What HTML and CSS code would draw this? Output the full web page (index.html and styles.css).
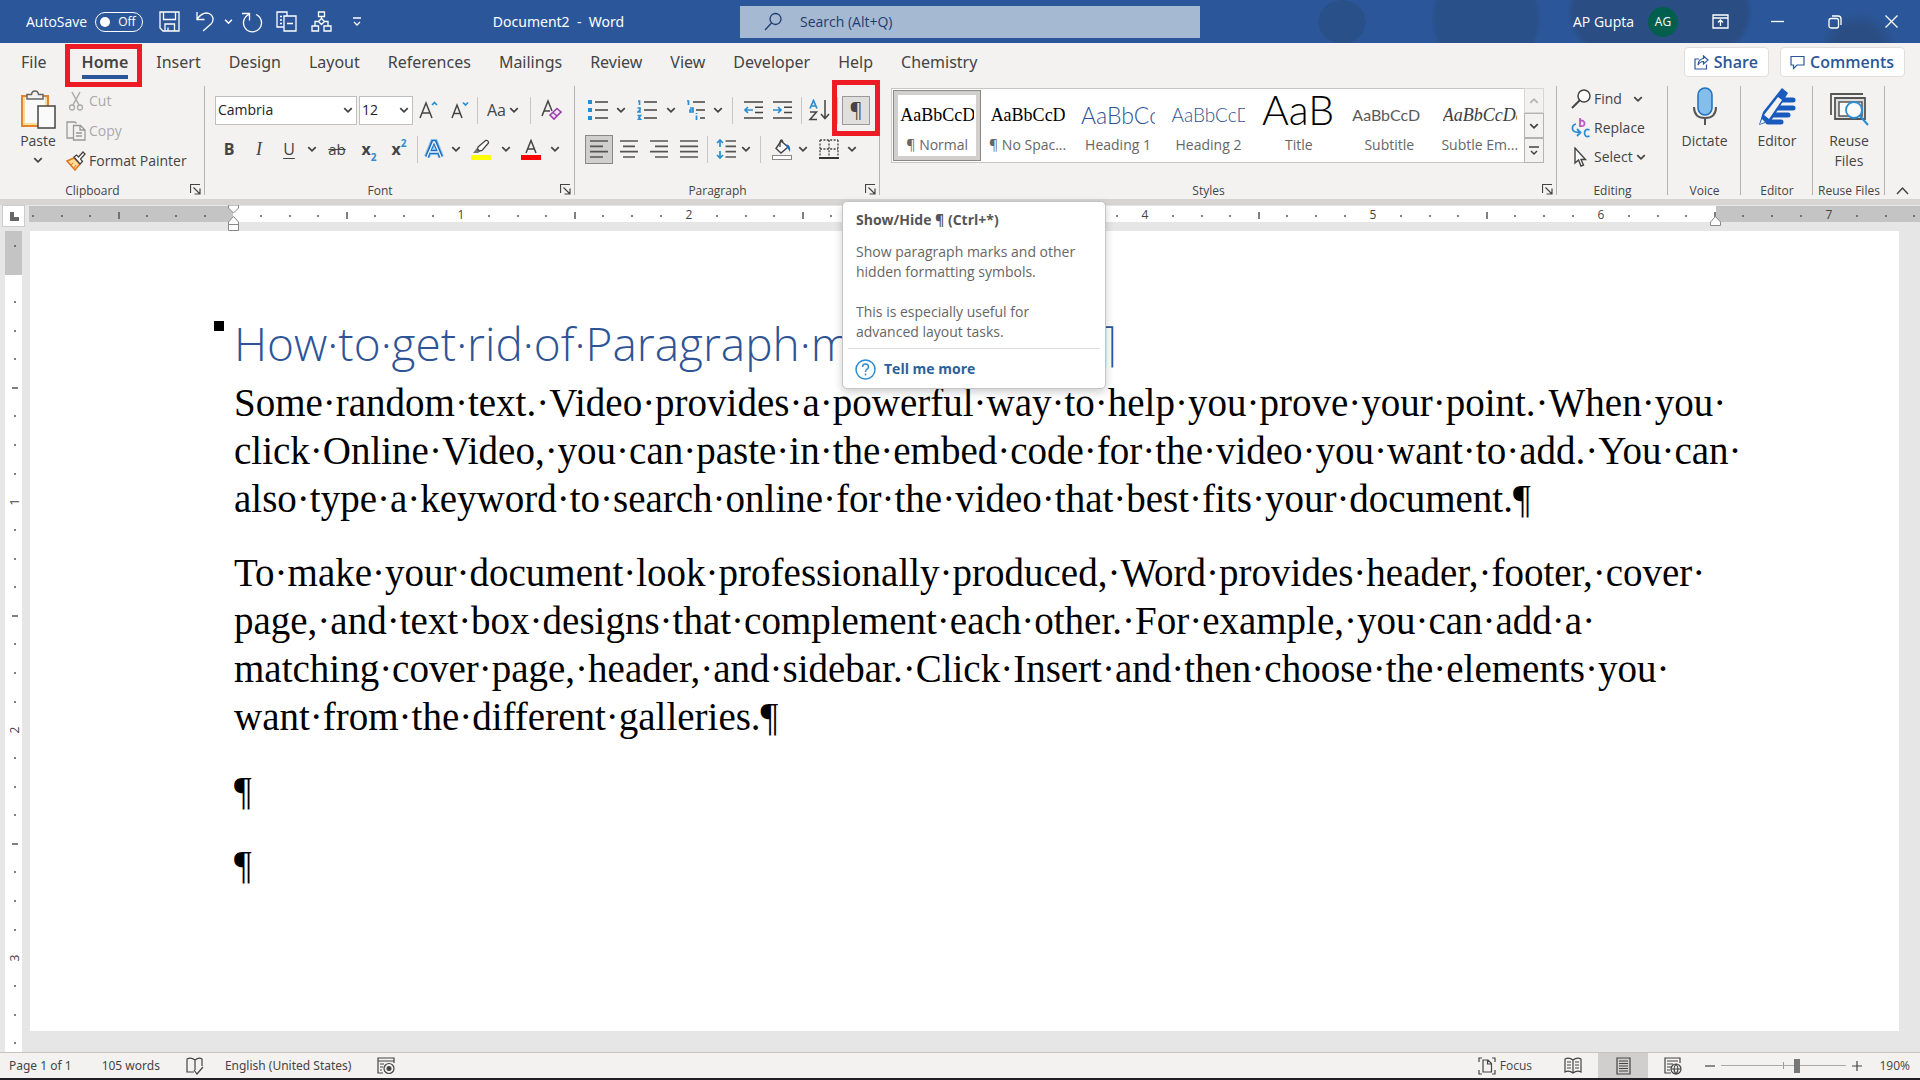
FILE: index.html
```html
<!DOCTYPE html>
<html lang="en">
<head>
<meta charset="utf-8">
<title>Document2 - Word</title>
<link rel="stylesheet" href="styles.css">
</head>
<body>
<svg class="defs" aria-hidden="true">
  <symbol id="chev" viewBox="0 0 8 8"><path d="M1 2.5 4 5.5 7 2.5" fill="none" stroke="currentColor" stroke-width="1.4"/></symbol>
  <symbol id="launch" viewBox="0 0 11 11"><path d="M.5 9V.5H10M3.5 3.500 9.500 9.500M10 4.500V10H4.500" fill="none" stroke="#444" stroke-width="1.2"/></symbol>
</svg>

<header class="titlebar">
  <div class="quick">
    <label class="autosave">AutoSave <span class="switch"><input type="checkbox">Off</span></label>
    <button class="q" aria-label="Save"><svg width="21" height="21" viewBox="0 0 21 21"><path d="M1 1H20V20H4L1 17ZM4.500 1V8.500H16.500V1M6 20V13H15.500V20M9 20V16.500"/></svg></button>
    <button class="q" aria-label="Undo"><svg width="20" height="21" viewBox="0 0 20 21"><path d="M2 1V8.500H9.500M2 8C6 3 10 1 14 2.500C19 4.500 19 10 16 13L8 20"/></svg></button>
    <button class="q narrow" aria-label="Undo list"><svg width="9" height="9"><use href="#chev"/></svg></button>
    <button class="q" aria-label="Redo"><svg width="22" height="22" viewBox="0 0 22 22"><path d="M1 2.500H8.500V9.500M8 3.500A9 9 0 1 0 15 3.500"/></svg></button>
    <button class="q" aria-label="Copy format"><svg width="21" height="21" viewBox="0 0 21 21"><path d="M8 16H1V1H11V5M8 5H20V20H8ZM4 5.500H6M4 9H6M11 12.500H17M4 12.500H6"/></svg></button>
    <button class="q" aria-label="Hierarchy"><svg width="21" height="21" viewBox="0 0 21 21"><path d="M7.500 1H13.500V5.500H7.500ZM10.500 5.500V7.500M10.500 7.500 13.500 10.500 10.500 13.500 7.500 10.500ZM7.500 10.500H4V15M13.500 10.500H17V15M1 15H7.500V20H1ZM13 15H20V20H13Z"/></svg></button>
    <button class="q" aria-label="Customize"><svg width="10" height="10" viewBox="0 0 10 10"><path d="M1 1H9M2 5 5 8 8 5"/></svg></button>
    <span class="doc-title">Document2 &nbsp;- &nbsp;Word</span>
  </div>
  <label class="search"><svg width="19" height="19" viewBox="0 0 19 19"><circle cx="11.500" cy="7" r="5.500"/><path d="M7.500 11 1 18"/></svg><input type="text" placeholder="Search (Alt+Q)" aria-label="Search"></label>
  <div class="account">
    <span>AP Gupta</span><span class="avatar">AG</span>
    <button class="win" aria-label="Ribbon display"><svg width="17" height="15" viewBox="0 0 17 15"><path d="M1 1H16V14H1ZM1 4H16M8.500 12V6M6 8.500 8.500 6 11 8.500"/></svg></button>
    <button class="win" aria-label="Minimize"><svg width="13" height="13"><path d="M0 6.500H13"/></svg></button>
    <button class="win" aria-label="Restore"><svg width="14" height="14" viewBox="0 0 14 14"><rect x="1" y="3.500" width="9.500" height="9.500" rx="2"/><path d="M4 1H10Q13 1 13 4V10"/></svg></button>
    <button class="win" aria-label="Close"><svg width="13" height="13"><path d="M.5.5 12.500 12.500M12.500.5.5 12.500"/></svg></button>
  </div>
</header>

<nav class="tabs">
  <button class="tab file">File</button>
  <button class="tab active"><span>Home</span></button>
  <button class="tab">Insert</button>
  <button class="tab">Design</button>
  <button class="tab">Layout</button>
  <button class="tab">References</button>
  <button class="tab">Mailings</button>
  <button class="tab">Review</button>
  <button class="tab">View</button>
  <button class="tab">Developer</button>
  <button class="tab">Help</button>
  <button class="tab">Chemistry</button>
  <div class="tab-actions">
    <button class="action"><svg width="15" height="15" viewBox="0 0 15 15"><path d="M5 4H1V14H12.500V9.500M9.500 1 14 5 9.500 9V6.500Q6 6.500 4 10Q4.500 4 9.500 3.500Z"/></svg>Share</button>
    <button class="action"><svg width="15" height="15" viewBox="0 0 15 15"><path d="M1 1.500H14V10H7L3.500 13.500V10H1Z"/></svg>Comments</button>
  </div>
</nav>

<section class="ribbon">
  <div class="group clipboard">
    <div class="body">
      <button class="big"><svg width="36" height="39" viewBox="0 0 36 39"><path d="M2 6H28V36H2Z" fill="#fddb96" stroke="#e0852d" stroke-width="2"/><path d="M5 7H25V33H5Z" fill="#fafafa"/><path d="M7 9V4.500H11.500Q12 1 15 1T18.500 4.500H23V9Z" fill="#f3f2f1" stroke="#666" stroke-width="1.500"/><rect x="18" y="16" width="17" height="22" fill="#fafafa" stroke="#444" stroke-width="1.500"/></svg><span>Paste</span><svg width="10" height="10"><use href="#chev"/></svg></button>
      <div class="stack">
        <button class="line off"><svg width="20" height="20" viewBox="0 0 20 20"><path d="M6 1 13 14M14 1 7 14" fill="none" stroke="#aaa" stroke-width="1.500"/><circle cx="6" cy="16.500" r="2.500" fill="none" stroke="#aaa" stroke-width="1.300"/><circle cx="14" cy="16.500" r="2.500" fill="none" stroke="#aaa" stroke-width="1.300"/></svg>Cut</button>
        <button class="line off"><svg width="20" height="20" viewBox="0 0 20 20"><path d="M7 17H1V1H9L10.500 2.500M7.500 4.500H14.500L19 9V19H7.500ZM14 4.500V9H19M10 12H16M10 15H16" fill="none" stroke="#999" stroke-width="1.300"/></svg>Copy</button>
        <button class="line"><svg width="20" height="20" viewBox="0 0 20 20"><path d="M1 10 8 7 14 13 9 19Z" fill="#fddb96" stroke="#e0761d" stroke-width="1.500"/><path d="M5 14 7 12M8 17 10 14" stroke="#e0761d"/><path d="M8 6 10.500 4 12.500 6 17 1 19 3 14.500 8 16.500 10.500 14 13Z" fill="#fff" stroke="#444" stroke-width="1.300"/></svg>Format Painter</button>
      </div>
    </div>
    <footer>Clipboard<svg class="launch"><use href="#launch"/></svg></footer>
  </div>

  <div class="group font">
    <div class="rows">
      <div class="row font-a">
        <label class="combo name"><select aria-label="Font"><option>Cambria</option></select><svg width="10" height="10"><use href="#chev"/></svg></label>
        <label class="combo"><select aria-label="Font size"><option>12</option></select><svg width="10" height="10"><use href="#chev"/></svg></label>
        <button class="ib" aria-label="Grow font"><svg width="20" height="20" viewBox="0 0 20 20"><path class="k" d="M1 18 7 3 13 18M3 13H11"/><path class="b" d="M13 5 15.500 2.500 18 5"/></svg></button>
        <button class="ib" aria-label="Shrink font"><svg width="20" height="20" viewBox="0 0 20 20"><path class="k" d="M2 18 7 5 12 18M4 13.500H10"/><path class="b" d="M13 2.500 15.500 5 18 2.500"/></svg></button>
        <i class="sep"></i>
        <button class="ib case">Aa<svg width="10" height="10"><use href="#chev"/></svg></button>
        <i class="sep"></i>
        <button class="ib" aria-label="Clear formatting"><svg width="22" height="22" viewBox="0 0 22 22"><path class="k" d="M1 17 7 2 11 12M3 12H9"/><path d="M9 16 16 9.500 20 13 13 20Z" fill="#f3e6f6" stroke="#9b3fae" stroke-width="1.600"/><path d="M12 13.500 16 17" stroke="#9b3fae" stroke-width="1.500"/></svg></button>
      </div>
      <div class="row font-b">
        <button class="ib"><b>B</b></button>
        <button class="ib ital">I</button>
        <button class="ib under">U</button>
        <button class="ib" aria-label="Underline styles"><svg width="10" height="10"><use href="#chev"/></svg></button>
        <button class="ib strike">ab</button>
        <button class="ib"><b>x</b><sub>2</sub></button>
        <button class="ib"><b>x</b><sup>2</sup></button>
        <i class="sep"></i>
        <button class="ib" aria-label="Text effects"><svg width="20" height="20" viewBox="0 0 20 20"><path d="M3 18 9 3H11L17 18M6 13H14" fill="none" stroke="#83beec" stroke-width="6"/><path d="M3 18 9 3H11L17 18M6 13H14" fill="none" stroke="#1e6fc0" stroke-width="4"/><path d="M3 18 9.500 3H10.500L17 18M6 13H14" fill="none" stroke="#f5fafe" stroke-width="1.300"/></svg></button>
        <button class="ib" aria-label="Text effects list"><svg width="10" height="10"><use href="#chev"/></svg></button>
        <button class="ib" aria-label="Highlight"><svg width="20" height="21" viewBox="0 0 20 21"><path d="M0 16H20V21H0Z" fill="#ff0"/><path d="M2 14 6 9 9 12.500 7 14Z" fill="#777"/><path d="M7 8 14.500 1.500Q17.500 1 17.500 4L11 11.500 8.500 12 6.500 10Z" fill="#fafafa" stroke="#444" stroke-width="1.300"/></svg></button>
        <button class="ib" aria-label="Highlight colors"><svg width="10" height="10"><use href="#chev"/></svg></button>
        <button class="ib" aria-label="Font color"><svg width="20" height="21" viewBox="0 0 20 21"><path d="M0 16H20V21H0Z" fill="red"/><path class="k" d="M5 14 10 1.500 15 14M7 10H13"/></svg></button>
        <button class="ib" aria-label="Font colors"><svg width="10" height="10"><use href="#chev"/></svg></button>
      </div>
    </div>
    <footer>Font<svg class="launch"><use href="#launch"/></svg></footer>
  </div>

  <div class="group para">
    <div class="rows">
      <div class="row para-a">
        <button class="ib" aria-label="Bullets"><svg width="20" height="20" viewBox="0 0 20 20"><path d="M0 0H4V4H0ZM0 8H4V12H0ZM0 16H4V20H0Z" fill="#2a8dd4"/><path class="k" d="M7 2H20M7 10H20M7 18H20"/></svg></button>
        <button class="ib" aria-label="Bullet library"><svg width="10" height="10"><use href="#chev"/></svg></button>
        <button class="ib" aria-label="Numbering"><svg width="20" height="20" viewBox="0 0 20 20"><path class="b" d="M1 1H2.500V5M.5 8H3V10L1 12H4M.5 15.500H3.500L2 17.500 3.500 19.300H.5"/><path class="k" d="M7 2H20M7 10H20M7 18H20"/></svg></button>
        <button class="ib" aria-label="Numbering library"><svg width="10" height="10"><use href="#chev"/></svg></button>
        <button class="ib" aria-label="Multilevel list"><svg width="20" height="20" viewBox="0 0 20 20"><path class="b" d="M1 1H2.500V5M4 8H7V12H4V10H7M10.500 13V14M10.500 15.500V20"/><path class="k" d="M7 2H19M10 10H19M14 18H19"/></svg></button>
        <button class="ib" aria-label="List library"><svg width="10" height="10"><use href="#chev"/></svg></button>
        <i class="sep"></i>
        <button class="ib" aria-label="Decrease indent"><svg width="19" height="18" viewBox="0 0 19 18"><path class="k" d="M0 1H19M11 6.300H19M11 11.500H19M0 17H19"/><path class="b" d="M1 9H9M4 6 1 9 4 12"/></svg></button>
        <button class="ib" aria-label="Increase indent"><svg width="19" height="18" viewBox="0 0 19 18"><path class="k" d="M0 1H19M11 6.300H19M11 11.500H19M0 17H19"/><path class="b" d="M0 9H8M5 6 8 9 5 12"/></svg></button>
        <i class="sep"></i>
        <button class="ib" aria-label="Sort"><svg width="22" height="22" viewBox="0 0 22 22"><path class="b" d="M2 9.500 5.500 1.500 9 9.500M3 7H8"/><path class="k" d="M2 13H8.500L2 20.500H9M17 1V19M13 15 17 19.500 21 15"/></svg></button>
        <i class="sep"></i>
        <div class="showhide">
          <button class="ib on" aria-describedby="tip">¶</button>
          <div class="tooltip" id="tip" role="tooltip">
            <strong>Show/Hide ¶ (Ctrl+*)</strong>
            <p>Show paragraph marks and other<br>hidden formatting symbols.</p>
            <p>This is especially useful for<br>advanced layout tasks.</p>
            <a href="#"><svg width="21" height="21" viewBox="0 0 21 21"><circle cx="10.500" cy="10.500" r="9.500" fill="none" stroke="#2a8dd4" stroke-width="1.500"/><path d="M7.500 8Q7.500 5 10.500 5T13.500 8Q13.500 9.500 11.500 10.500Q10.500 11.200 10.500 13M10.500 14.500V16.500" fill="none" stroke="#2a8dd4" stroke-width="1.500"/></svg>Tell me more</a>
          </div>
        </div>
      </div>
      <div class="row para-b">
        <button class="ib pressed" aria-label="Align left"><svg width="18" height="18"><path class="k" d="M0 1H18M0 6.300H13M0 11.600H18M0 17H13"/></svg></button>
        <button class="ib" aria-label="Center"><svg width="18" height="18"><path class="k" d="M0 1H18M3 6.300H15M0 11.600H18M3 17H15"/></svg></button>
        <button class="ib" aria-label="Align right"><svg width="18" height="18"><path class="k" d="M0 1H18M5 6.300H18M0 11.600H18M5 17H18"/></svg></button>
        <button class="ib" aria-label="Justify"><svg width="18" height="18"><path class="k" d="M0 1H18M0 6.300H18M0 11.600H18M0 17H18"/></svg></button>
        <i class="sep"></i>
        <button class="ib" aria-label="Line spacing"><svg width="21" height="20" viewBox="0 0 21 20"><path class="b" d="M4 1V8M1 4 4 1 7 4M4 12V19M1 16 4 19 7 16"/><path class="k" d="M9.500 2H20M9.500 7.300H20M9.500 12.600H20M9.500 18H20"/></svg></button>
        <button class="ib" aria-label="Line spacing list"><svg width="10" height="10"><use href="#chev"/></svg></button>
        <i class="sep"></i>
        <button class="ib" aria-label="Shading"><svg width="21" height="21" viewBox="0 0 21 21"><rect x=".5" y="16.500" width="19" height="4" fill="#fff" stroke="#888"/><path d="M9 2 16 8 9 14 4 9.500Z" fill="#fafafa" stroke="#444" stroke-width="1.400"/><path d="M8 8V3Q9.500-1 11 3" fill="none" stroke="#444" stroke-width="1.300"/><path d="M14 5.500Q19 5 18 13L15.500 9Z" fill="#1e6fc0"/></svg></button>
        <button class="ib" aria-label="Shading colors"><svg width="10" height="10"><use href="#chev"/></svg></button>
        <button class="ib" aria-label="Borders"><svg width="20" height="20" viewBox="0 0 20 20"><path d="M1 1H19M1 10H19M1 1V18M10 1V18M19 1V18" fill="none" stroke="#444" stroke-width="1.300" stroke-dasharray="2 1.400"/><path d="M0 19H20" stroke="#333" stroke-width="2"/></svg></button>
        <button class="ib" aria-label="Border list"><svg width="10" height="10"><use href="#chev"/></svg></button>
      </div>
    </div>
    <footer>Paragraph<svg class="launch"><use href="#launch"/></svg></footer>
  </div>

  <div class="group styles">
    <div class="gallery">
      <button class="style chosen"><span class="sample serif">AaBbCcDd</span><span>¶ Normal</span></button>
      <button class="style"><span class="sample serif">AaBbCcDd</span><span>¶ No Spac...</span></button>
      <button class="style"><span class="sample h1">AaBbCc</span><span>Heading 1</span></button>
      <button class="style"><span class="sample h2">AaBbCcD</span><span>Heading 2</span></button>
      <button class="style"><span class="sample title">AaB</span><span>Title</span></button>
      <button class="style"><span class="sample subtitle">AaBbCcD</span><span>Subtitle</span></button>
      <button class="style"><span class="sample subtle">AaBbCcDd</span><span>Subtle Em...</span></button>
      <div class="scroller">
        <button class="off" aria-label="Previous styles"><svg class="flip" width="10" height="10"><use href="#chev"/></svg></button>
        <button aria-label="Next styles"><svg width="10" height="10"><use href="#chev"/></svg></button>
        <button aria-label="More styles"><svg width="10" height="10" viewBox="0 0 10 10"><path class="k" d="M0 1H10M2 5 5 8 8 5"/></svg></button>
      </div>
    </div>
    <footer>Styles<svg class="launch"><use href="#launch"/></svg></footer>
  </div>

  <div class="group editing">
    <div class="stack">
      <button class="line"><svg width="20" height="20" viewBox="0 0 20 20"><circle cx="13" cy="7" r="6" fill="#fafafa" stroke="#444" stroke-width="1.500"/><path d="M9 11 1 19" stroke="#444" stroke-width="2"/></svg>Find<svg class="far" width="10" height="10"><use href="#chev"/></svg></button>
      <button class="line"><svg width="20" height="20" viewBox="0 0 20 20"><path d="M9 0V9M9 5Q10-.0 13.500 4.500Q14 9 9 8" fill="none" stroke="#b45ac0" stroke-width="1.800"/><path d="M18.500 12Q14 10 13.500 15Q14 20 18.500 18" fill="none" stroke="#2a8dd4" stroke-width="1.800"/><path d="M5 6Q1 7 1.500 11Q2 14.500 9 14.500M6 11 9.500 14.500 6 18" fill="none" stroke="#2a8dd4" stroke-width="1.800"/></svg>Replace</button>
      <button class="line"><svg width="20" height="20" viewBox="0 0 20 20"><path d="M4 1V16L7.500 13 10 19 12.500 18 10 12.500H14.500Z" fill="#fafafa" stroke="#444" stroke-width="1.400"/></svg>Select<svg width="10" height="10"><use href="#chev"/></svg></button>
    </div>
    <footer>Editing</footer>
  </div>

  <div class="group solo">
    <button class="big"><svg width="26" height="39" viewBox="0 0 26 39"><rect x="6" y="1" width="14" height="27" rx="7" fill="#83beec" stroke="#1e6fc0" stroke-width="1.500"/><path d="M2 20Q2 31 13 31T24 20M13 31V38" fill="none" stroke="#555" stroke-width="2"/></svg><span>Dictate</span></button>
    <footer>Voice</footer>
  </div>
  <div class="group solo">
    <button class="big"><svg width="40" height="39" viewBox="0 0 40 39"><path d="M21 13H36M17 21H36M15 28H31M11 35H24" stroke="#185abd" stroke-width="5" stroke-linecap="round"/><path d="M25 1 31 6 14 34 2 38 6 25Z" fill="#185abd"/><path d="M21 10 25 13 12 32 7 28Z" fill="#f3f2f1"/><path d="M5 32 8 35 3 37Z" fill="#f3f2f1"/></svg><span>Editor</span></button>
    <footer>Editor</footer>
  </div>
  <div class="group solo">
    <button class="big"><svg width="40" height="39" viewBox="0 0 40 39"><path d="M2 28V7H34" fill="none" stroke="#555" stroke-width="1.800"/><path d="M6 33V11H36V32H6" fill="#ddd" stroke="#555" stroke-width="1.800"/><path d="M10 29V15H33V29Z" fill="#fafafa" stroke="#555" stroke-width="1.500"/><circle cx="25" cy="23" r="8" fill="#fafafa" stroke="#2a8dd4" stroke-width="1.800"/><path d="M31 29 39 38" stroke="#2a8dd4" stroke-width="2"/></svg><span>Reuse<br>Files</span></button>
    <footer>Reuse Files</footer>
  </div>
  <button class="collapse" aria-label="Collapse ribbon"><svg width="13" height="9"><path class="k" d="M1 8 6.500 2 12 8"/></svg></button>
</section>

<div class="hruler">
  <div class="corner"><svg width="22" height="20"><path d="M9 6V13H16" fill="none" stroke="#666" stroke-width="4"/></svg></div>
  <svg class="scale" width="100%" height="28">
    <defs><pattern id="ht" x="204" y="0" width="228" height="28" patternUnits="userSpaceOnUse"><path d="M28 10v2M57 10v2M85 10v2M114 7v7M142 10v2M171 10v2M200 10v2" stroke="#555" stroke-width="1.500"/></pattern></defs>
    <rect y="1" width="100%" height="16" fill="#fff"/>
    <rect y="1" width="204" height="16" fill="#c4c4c4"/>
    <rect x="1687" y="1" width="100%" height="16" fill="#c4c4c4"/>
    <rect width="100%" height="28" fill="url(#ht)"/>
    <g><text x="432" y="14">1</text><text x="660" y="14">2</text><text x="888" y="14">3</text><text x="1116" y="14">4</text><text x="1344" y="14">5</text><text x="1572" y="14">6</text><text x="1800" y="14">7</text></g>
    <path class="mark" d="M199.500 0H209.500V3L204.500 8 199.500 3ZM204.500 11.500 209.500 17V25.500H199.500V17ZM199.500 19.500H209.500M1686.500 11.500 1691.500 17V20.500H1681.500V17Z"/>
  </svg>
</div>

<main class="workspace">
  <svg class="vruler" width="17" height="100%">
    <defs><pattern id="vt" x="0" y="43" width="17" height="228" patternUnits="userSpaceOnUse"><path d="M9 28h2M9 57h2M9 85h2M7 114h6M9 142h2M9 171h2M9 200h2" stroke="#555" stroke-width="1.500"/></pattern></defs>
    <rect width="17" height="100%" fill="#fff"/><rect width="17" height="44" fill="#c4c4c4"/>
    <rect width="17" height="100%" fill="url(#vt)"/>
    <g><text transform="translate(14 271) rotate(-90)">1</text><text transform="translate(14 499) rotate(-90)">2</text><text transform="translate(14 727) rotate(-90)">3</text></g>
  </svg>
  <article class="page">
    <h1>How·to·get·rid·of·Paragraph·mark·in·Word¶</h1>
    <p>Some·random·text.·Video·provides·a·powerful·way·to·help·you·prove·your·point.·When·you·<br>click·Online·Video,·you·can·paste·in·the·embed·code·for·the·video·you·want·to·add.·You·can·<br>also·type·a·keyword·to·search·online·for·the·video·that·best·fits·your·document.¶</p>
    <p>To·make·your·document·look·professionally·produced,·Word·provides·header,·footer,·cover·<br>page,·and·text·box·designs·that·complement·each·other.·For·example,·you·can·add·a·<br>matching·cover·page,·header,·and·sidebar.·Click·Insert·and·then·choose·the·elements·you·<br>want·from·the·different·galleries.¶</p>
    <p>¶</p>
    <p>¶</p>
  </article>
</main>

<footer class="status">
  <span class="st pages">Page 1 of 1</span>
  <span class="st">105 words</span>
  <svg width="18" height="18" viewBox="0 0 18 18"><path class="k" d="M9 3Q5 0 1 2V15H8M9 3Q13 0 16 2V9M9 3V13M8 13 11 17 17 10"/></svg>
  <span class="st">English (United States)</span>
  <svg width="18" height="18" viewBox="0 0 18 18"><path class="k" d="M6 16H1V1H17V6M1 4H17M3 7H7M3 10H6M3 13H5"/><circle class="k" cx="12" cy="11.500" r="5"/><circle cx="12" cy="11.500" r="2.500" fill="#444"/></svg>
  <div class="views">
    <button class="focus"><svg width="18" height="18" viewBox="0 0 18 18"><path class="k" d="M1 5V1H4M14 1H17V5M1 13V17H4M14 17H17V13M5 3H10L13.500 6.500V15H5ZM9.500 3V7H13.500"/></svg>Focus</button>
    <button class="view" aria-label="Read mode"><svg width="18" height="18" viewBox="0 0 18 18"><path class="k" d="M9 3Q5 0 1 2V15Q5 13 9 16Q13 13 17 15V2Q13 0 9 3V16M3 5H7M3 8H7M3 11H7M11 5H15M11 8H15M11 11H15"/></svg></button>
    <button class="view current" aria-label="Print layout"><svg width="15" height="18" viewBox="0 0 15 18"><path class="k" d="M1 1H14V17H1ZM3 4H12M3 6.500H12M3 9H12M3 11.500H12M3 14H12"/></svg></button>
    <button class="view" aria-label="Web layout"><svg width="18" height="18" viewBox="0 0 18 18"><path class="k" d="M7 16H1V1H16V6M3 4H14M3 7H9M3 10H7M3 13H6"/><circle class="k" cx="12" cy="12" r="5"/><path class="k" d="M7 12H17M12 7Q8 12 12 17Q16 12 12 7"/></svg></button>
    <button class="zoomer" aria-label="Zoom out"><svg width="10" height="10"><path class="k" d="M0 5H10"/></svg></button>
    <input type="range" min="0" max="100" value="61" aria-label="Zoom">
    <button class="zoomer" aria-label="Zoom in"><svg width="10" height="10"><path class="k" d="M0 5H10M5 0V10"/></svg></button>
    <span class="percent">190%</span>
  </div>
</footer>
</body>
</html>
```
FILE: styles.css
```css
* { box-sizing: border-box; }
body {
  margin: 0;
  min-height: 100vh;
  display: flex;
  flex-direction: column;
  background: #e6e6e6;
  color: #444;
  font: 14px/20px "Open Sans", "Noto Sans", sans-serif;
}
button {
  border: 0;
  padding: 0;
  background: none;
  color: inherit;
  font: inherit;
  display: flex;
  align-items: center;
  justify-content: center;
}
svg { flex: none; display: block; }
.defs { width: 0; height: 0; position: absolute; }
.k { fill: none; stroke: #444; stroke-width: 1.5; }
.b { fill: none; stroke: #2a8dd4; stroke-width: 1.7; }

/* Title bar */
.titlebar {
  height: 43px;
  display: grid;
  grid-template-columns: 740fr 460fr 720fr;
  align-items: center;
  color: #fff;
  background:
    radial-gradient(ellipse 24px 22px at 1342px 22px, #2a5089 98%, transparent),
    radial-gradient(ellipse 56px 60px at 1486px 18px, #2a5089 90%, transparent),
    radial-gradient(ellipse 94px 60px at 1660px 12px, #2a4e84 92%, transparent),
    radial-gradient(ellipse 40px 40px at 1858px 50px, #2a4e84 60%, transparent),
    #2b579a;
}
.titlebar svg { fill: none; stroke: currentColor; stroke-width: 1.3; }
.quick { display: flex; align-items: center; padding-left: 26px; }
.autosave { display: flex; align-items: center; gap: 8px; margin-right: 9px; }
.switch {
  width: 48px;
  height: 20px;
  border: 1px solid #fff;
  border-radius: 10px;
  display: flex;
  align-items: center;
  gap: 8px;
  padding-left: 4px;
  font-size: 12px;
}
.switch input { appearance: none; width: 10px; height: 10px; margin: 0; border-radius: 50%; background: #fff; }
.q { width: 35px; height: 32px; }
.q.narrow { width: 12px; }
.doc-title { margin-left: auto; padding-right: 116px; white-space: pre; font-family: "Noto Sans", sans-serif; }
.search {
  height: 32px;
  display: flex;
  align-items: center;
  gap: 17px;
  padding-left: 24px;
  color: #1c3c6e;
  background: #a6b9d3;
}
.search input { flex: 1; border: 0; background: none; font: inherit; padding: 0; outline: 0; }
.search input::placeholder { color: #1c3c6e; opacity: 1; }
.account { display: flex; align-items: center; justify-content: flex-end; }
.avatar {
  width: 30px;
  height: 30px;
  border-radius: 50%;
  background: #035f4d;
  display: grid;
  place-items: center;
  font-size: 12px;
  margin: 0 14px;
}
.win { width: 57px; height: 43px; }

/* Tabs */
.tabs { height: 43px; display: flex; align-items: stretch; padding-left: 7px; font-size: 16px; background: #f3f2f1; }
.tab { padding: 0 14px 6px; position: relative; font-family: "Noto Sans", sans-serif; }
.tab.file { margin-right: 7px; }
.tab.active { font-weight: 600; }
.tab.active span { border-bottom: 4px solid #2b579a; padding-bottom: 3px; margin-top: 8px; }
.tab.active::after { content: ""; position: absolute; inset: 1px 0 -1px -3px; border: 5px solid #ed1c24; z-index: 2; }
.tab-actions { margin-left: auto; display: flex; gap: 11px; padding: 4px 15px 9px 0; }
.action {
  gap: 5px;
  padding: 0 10px 0 9px;
  border: 1px solid #e1dfdd;
  border-radius: 4px;
  background: #fff;
  color: #2b579a;
  font-weight: 600;
}
.action svg { fill: none; stroke: #2b579a; stroke-width: 1.2; }

/* Ribbon */
.ribbon {
  height: 119px;
  display: flex;
  background: #f3f2f1;
  border-bottom: 6px solid #d6d5d4;
}
.group { display: flex; flex-direction: column; position: relative; }
.group::after { content: ""; position: absolute; right: 0; top: 0; bottom: 4px; width: 1px; background: #b5b3b1; }
.group > footer { margin-top: auto; height: 16px; padding-right: 20px; text-align: center; font-size: 12px; line-height: 16px; position: relative; white-space: nowrap; }
.launch { position: absolute; right: 4px; top: 1px; width: 11px; height: 11px; }
.stack { display: flex; flex-direction: column; }
.line { height: 29px; gap: 3px; justify-content: flex-start; white-space: nowrap; }
.line.off { color: #aaa; }
.line .far { margin-left: 8px; }
.big { flex-direction: column; justify-content: flex-start; text-align: center; line-height: 20px; }
.clipboard { width: 205px; }
.clipboard .body { display: flex; gap: 8px; padding-left: 18px; }
.clipboard .line { height: 30px; }
.clipboard .big { padding-top: 4px; width: 40px; }
.clipboard .big span { padding: 2px 0 4px; }
.rows { display: flex; flex-direction: column; gap: 9px; padding: 9px 0 0 9px; }
.row { display: grid; height: 30px; align-items: center; }
.ib { height: 29px; }
.sep { width: 1px; height: 27px; background: #c8c6c4; justify-self: center; }
.font { width: 370px; }
.font-a { grid-template-columns: 144px 54px 32px 30px 4px 48px 7px 36px; padding-left: 1px; }
.font-b { grid-template-columns: 30px 30px 30px 16px 34px 30px 30px 6px 28px 16px 34px 16px 34px 14px; font-size: 16px; }
.combo { position: relative; height: 29px; border: 1px solid #c1bfbd; background: #fff; display: flex; align-items: center; }
.combo.name { margin-right: 2px; }
.combo select { appearance: none; width: 100%; height: 100%; border: 0; background: none; font: inherit; color: #222; padding: 0 18px 0 2px; }
.combo svg { position: absolute; right: 3px; }
.case { font-size: 16px; gap: 3px; }
.ital { font-family: "Liberation Serif", serif; font-style: italic; font-size: 18px; }
.under { text-decoration: underline; text-underline-offset: 3px; }
.strike { text-decoration: line-through; font-size: 15px; }
.ib sub, .ib sup { font-size: 10px; font-weight: 700; color: #2a8dd4; line-height: 10px; }
.ib sub { align-self: flex-end; margin-bottom: 2px; }
.ib sup { align-self: flex-start; margin-top: 3px; }
.para { width: 305px; }
.para-a { grid-template-columns: 28px 18px 34px 14px 36px 8px 20px 22px 36px 2px 34px 2px 36px; }
.para-b { grid-template-columns: 30px 30px 30px 30px 6px 32px 8px 20px 24px 18px 34px 12px; }
.para-b .k { stroke: #555; stroke-width: 1.7; }
.pressed { background: #d0cfcd; border: 1px solid #8a8886; width: 28px; justify-self: center; }
.showhide { position: relative; width: 28px; justify-self: center; }
.showhide::before { content: ""; position: absolute; inset: -16px -10px -11px -10px; border: 5px solid #ed1c24; pointer-events: none; z-index: 2; }
.on { width: 28px; background: #e1dfdd; border: 1px solid #999; font-size: 20px; }
.tooltip {
  position: absolute;
  z-index: 5;
  left: 0;
  top: 105px;
  width: 264px;
  padding: 8px 5px 2px;
  border: 1px solid #c4c4c4;
  border-radius: 5px;
  background: #fff;
  box-shadow: 0 3px 8px #0003;
  color: #666;
  white-space: nowrap;
}
.tooltip strong { display: block; padding-left: 8px; color: #555; }
.tooltip p { margin: 12px 0 20px 8px; }
.tooltip p + p { margin: 0 0 6px 8px; }
.tooltip a { display: flex; align-items: center; gap: 8px; height: 38px; padding: 4px 0 0 7px; border-top: 1px solid #ddd; color: #2b6199; font-weight: 700; text-decoration: none; }
.styles { flex: 1; min-width: 0; }
.gallery { display: flex; margin: 2px 13px 0 11px; height: 75px; border: 1px solid #c8c6c4; background: #fff; }
.style { flex: 1 1 0; min-width: 0; flex-direction: column; justify-content: flex-start; padding: 7px; color: #666; white-space: nowrap; }
.style.chosen { padding: 1px; border: 5px solid #d0cfcd; outline: 1px solid #888; outline-offset: -1px; margin: 1px; }
.sample { width: 74px; height: 40px; overflow: hidden; line-height: 38px; text-align: left; }
.serif { font-family: "Liberation Serif", serif; font-size: 18px; color: #000; }
.h1 { font: 300 23px/38px Lato, sans-serif; color: #2f5496; }
.h2 { font: 300 19px/38px Lato, sans-serif; color: #2f5496; }
.title { font: 300 41px/28px Lato, sans-serif; color: #000; }
.subtitle { font: 16px/38px Lato, sans-serif; color: #5a5a5a; }
.subtle { font: italic 18px/38px "Liberation Serif", serif; color: #404040; }
.style > span:last-child { line-height: 20px; }
.scroller { width: 20px; display: flex; flex-direction: column; margin: -1px; }
.scroller button { flex: 1; border: 1px solid #b5b3b1; background: #f3f2f1; }
.scroller .off { color: #b5b3b1; border-color: #d8d6d4; }
.flip { transform: scaleY(-1); }
.editing { width: 111px; padding-left: 14px; }
.editing .stack { margin-top: -2px; }
.editing > footer { padding-right: 14px; }
.solo { width: 72px; }
.solo .big { padding-top: 1px; }
.solo .big span { padding-top: 5px; }
.solo > footer { padding-right: 0; }
.solo:nth-child(6) { width: 73px; }
.collapse { flex: 0 0 35px; align-items: flex-end; padding-bottom: 4px; }

/* Rulers and page */
.hruler { height: 26px; display: flex; }
.corner { width: 23px; height: 22px; margin: 0 4px 0 2px; background: #fff; border: 1px solid #ccc; }
.scale { flex: 1; min-width: 0; }
.hruler text, .vruler text { font-size: 12px; fill: #444; text-anchor: middle; }
.scale .mark { fill: #fff; stroke: #888; }
.workspace { flex: 1; display: flex; align-items: stretch; padding: 0 21px 0 5px; gap: 8px; position: relative; }
.vruler { position: static; height: auto; min-height: 100%; }
.page { flex: 1; background: #fff; margin-bottom: 21px; padding: 80px 180px 0 204px; color: #000; white-space: nowrap; overflow: hidden; position: relative; }
.page::before { content: ""; position: absolute; left: 184px; top: 90px; width: 10px; height: 10px; background: #000; }
.page h1 { margin: 0 0 4px; font: 300 46px/64px "Open Sans", sans-serif; color: #2f5496; }
.page p { margin: 0 0 26px; font: 39px/48px "Liberation Serif", serif; }

/* Status bar */
.status { height: 28px; display: flex; align-items: center; padding-left: 9px; font-size: 12px; background: #f3f2f1; border-top: 1px solid #c6c4c2; border-bottom: 2px solid #1f1f24; }
.status > * { margin-right: 21px; }
.status .k { stroke-width: 1.2; }
.status .st { margin-right: 26px; font-family: "Noto Sans", sans-serif; }
.status .pages { margin-right: 30px; }
.status .views { margin: 0 0 0 auto; align-self: stretch; display: flex; align-items: center; }
.focus { gap: 4px; margin-right: 16px; }
.view { width: 50px; align-self: stretch; }
.current { background: #d0cfcd; }
.zoomer { width: 10px; margin: 0 6px; }
.view + .zoomer { margin-left: 7px; }
.status input { appearance: none; width: 125px; height: 16px; margin: 0; background: linear-gradient(#aaa, #aaa) center / 100% 1px no-repeat, linear-gradient(#999, #999) center / 1px 7px no-repeat; }
.status input::-webkit-slider-thumb { appearance: none; width: 6px; height: 14px; background: #777; }
.percent { width: 52px; text-align: right; padding-right: 10px; }
```
